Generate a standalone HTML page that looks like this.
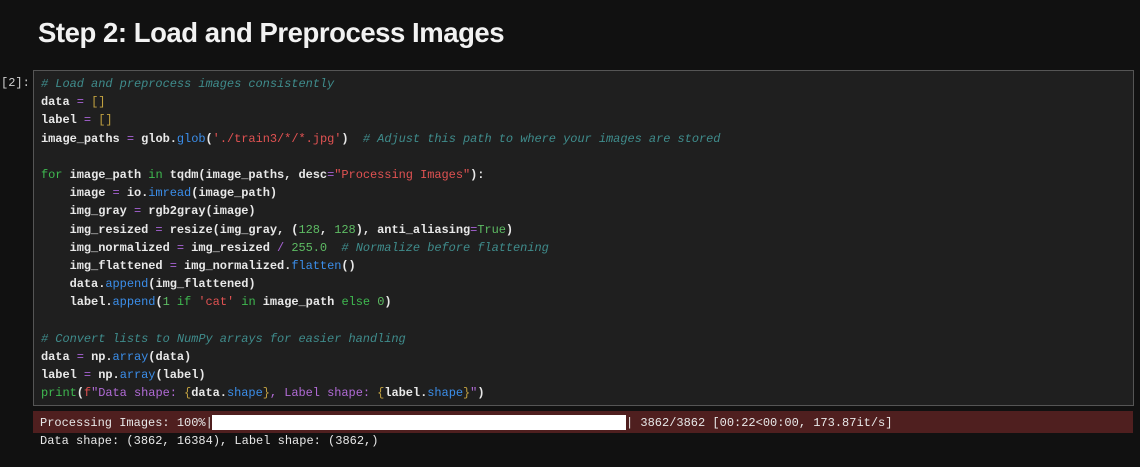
<!DOCTYPE html>
<html><head><style>
body{margin:0;background:#111111;width:1140px;height:467px;overflow:hidden;font-family:"Liberation Mono",monospace;}
h1{position:absolute;left:38px;top:17px;margin:0;font:bold 27.5px "Liberation Sans",sans-serif;color:#f2f2f2;letter-spacing:-0.45px}
.prompt{position:absolute;left:1px;top:76px;font-size:12px;color:#d0d0d0}
.cell{position:absolute;left:33px;top:70px;width:1099px;height:334px;background:#1f1f1f;border:1px solid #555}
pre{margin:0;position:absolute;left:7px;top:4px;font:12px/18.2px "Liberation Mono",monospace;color:#e8e8e8;font-weight:bold;letter-spacing:-0.05px}
.c{color:#3f8c8c;font-style:italic;font-weight:normal}
.o{color:#a763d6;font-weight:normal}
.k{color:#3fb950;font-weight:normal}
.s{color:#e05252;font-weight:normal}
.f{color:#3b8eea;font-weight:normal}
.n{color:#5dbb63;font-weight:normal}
.p{color:#c0a040;font-weight:normal}
.m{color:#b16bd6;font-weight:normal}
.out{position:absolute;left:33px;top:411px;width:1100px;height:22px;background:#4f1f1f}
.ot{position:absolute;font:12px "Liberation Mono",monospace;color:#e8e8e8;white-space:pre}
.bar{position:absolute;left:212px;top:415px;width:414px;height:15px;background:#fff}
</style></head><body>
<h1>Step 2: Load and Preprocess Images</h1>
<div class="prompt">[2]:</div>
<div class="cell"><pre><span class="c"># Load and preprocess images consistently</span>
data <span class="o">=</span> <span class="p">[]</span>
label <span class="o">=</span> <span class="p">[]</span>
image_paths <span class="o">=</span> glob.<span class="f">glob</span>(<span class="s">'./train3/*/*.jpg'</span>)  <span class="c"># Adjust this path to where your images are stored</span>

<span class="k">for</span> image_path <span class="k">in</span> tqdm(image_paths, desc<span class="o">=</span><span class="s">"Processing Images"</span>):
    image <span class="o">=</span> io.<span class="f">imread</span>(image_path)
    img_gray <span class="o">=</span> rgb2gray(image)
    img_resized <span class="o">=</span> resize(img_gray, (<span class="n">128</span>, <span class="n">128</span>), anti_aliasing<span class="o">=</span><span class="n">True</span>)
    img_normalized <span class="o">=</span> img_resized <span class="o">/</span> <span class="n">255.0</span>  <span class="c"># Normalize before flattening</span>
    img_flattened <span class="o">=</span> img_normalized.<span class="f">flatten</span>()
    data.<span class="f">append</span>(img_flattened)
    label.<span class="f">append</span>(<span class="n">1</span> <span class="k">if</span> <span class="s">'cat'</span> <span class="k">in</span> image_path <span class="k">else</span> <span class="n">0</span>)

<span class="c"># Convert lists to NumPy arrays for easier handling</span>
data <span class="o">=</span> np.<span class="f">array</span>(data)
label <span class="o">=</span> np.<span class="f">array</span>(label)
<span class="k">print</span>(<span class="s">f</span><span class="m">"Data shape: </span><span class="p">{</span>data.<span class="f">shape</span><span class="p">}</span><span class="m">, Label shape: </span><span class="p">{</span>label.<span class="f">shape</span><span class="p">}</span><span class="m">"</span>)</pre></div>
<div class="out"></div>
<div class="ot" style="top:416px;left:40px">Processing Images: 100%|</div>
<div class="bar"></div>
<div class="ot" style="top:416px;left:626px">| 3862/3862 [00:22&lt;00:00, 173.87it/s]</div>
<div class="ot" style="top:434px;left:40px">Data shape: (3862, 16384), Label shape: (3862,)</div>
</body></html>
